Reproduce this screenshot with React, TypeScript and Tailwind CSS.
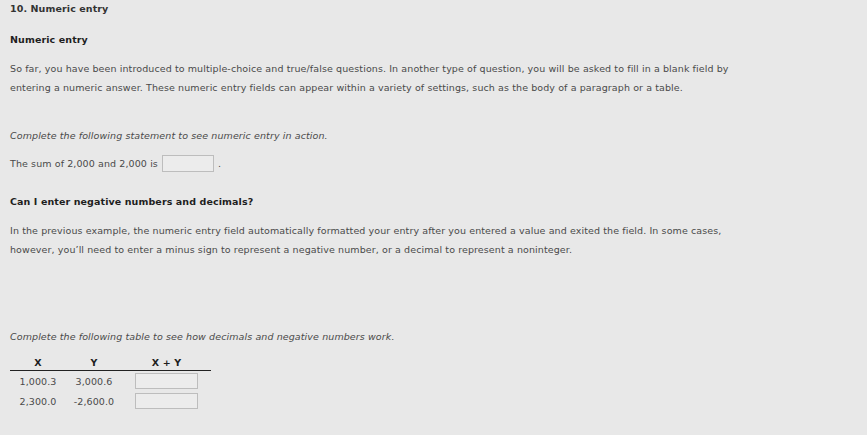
const font = { fontFamily: '"DejaVu Sans", Verdana, sans-serif' };

const rows = [
  { x: "1,000.3", y: "3,000.6" },
  { x: "2,300.0", y: "-2,600.0" },
];

function Blank({ className }: { className: string }) {
  return <span className={`inline-block border border-[#bdbdbd] bg-[#ececec] align-middle ${className}`} />;
}

export default function App() {
  return (
    <div
      className="w-[867px] h-[435px] bg-[#e8e8e8] px-[10px] text-[9.5px] tracking-[0.1px] leading-[19px] text-[#4a4a4a] [font-variant-ligatures:none]"
      style={font}
    >
      <h1 className="h-[18px] leading-[18px] font-bold text-[#333]">10. Numeric entry</h1>
      <h2 className="mt-[12px] font-bold text-[#1e1e1e]">Numeric entry</h2>
      <p className="mt-[10px] w-[740px]">
        So far, you have been introduced to multiple-choice and true/false questions. In another type of question, you will be asked to fill in a blank field by entering a numeric answer. These numeric entry fields can appear within a variety of settings, such as the body of a paragraph or a table.
      </p>
      <p className="mt-[29px] italic">Complete the following statement to see numeric entry in action.</p>
      <p className="mt-[9px] flex items-center h-[19px]">
        <span>The sum of 2,000 and 2,000 is</span>
        <Blank className="ml-[4px] w-[52px] h-[17px]" />
        <span className="ml-[4px]">.</span>
      </p>
      <h2 className="mt-[19px] font-bold text-[#1e1e1e]">Can I enter negative numbers and decimals?</h2>
      <p className="mt-[10px] w-[740px]">
        In the previous example, the numeric entry field automatically formatted your entry after you entered a value and exited the field. In some cases, however, you’ll need to enter a minus sign to represent a negative number, or a decimal to represent a noninteger.
      </p>
      <p className="mt-[68px] italic">Complete the following table to see how decimals and negative numbers work.</p>
      <div className="mt-[8px] w-[201px]">
        <div className="grid grid-cols-[56px_56px_89px] h-[17px] leading-[17px] border-b border-[#222] font-bold text-[#1e1e1e] text-center">
          <span>X</span>
          <span>Y</span>
          <span>X + Y</span>
        </div>
        {rows.map((r) => (
          <div key={r.x} className="grid grid-cols-[56px_56px_89px] h-[20px] items-center text-center">
            <span>{r.x}</span>
            <span>{r.y}</span>
            <span className="flex justify-center">
              <Blank className="w-[63px] h-[16px]" />
            </span>
          </div>
        ))}
      </div>
    </div>
  );
}
